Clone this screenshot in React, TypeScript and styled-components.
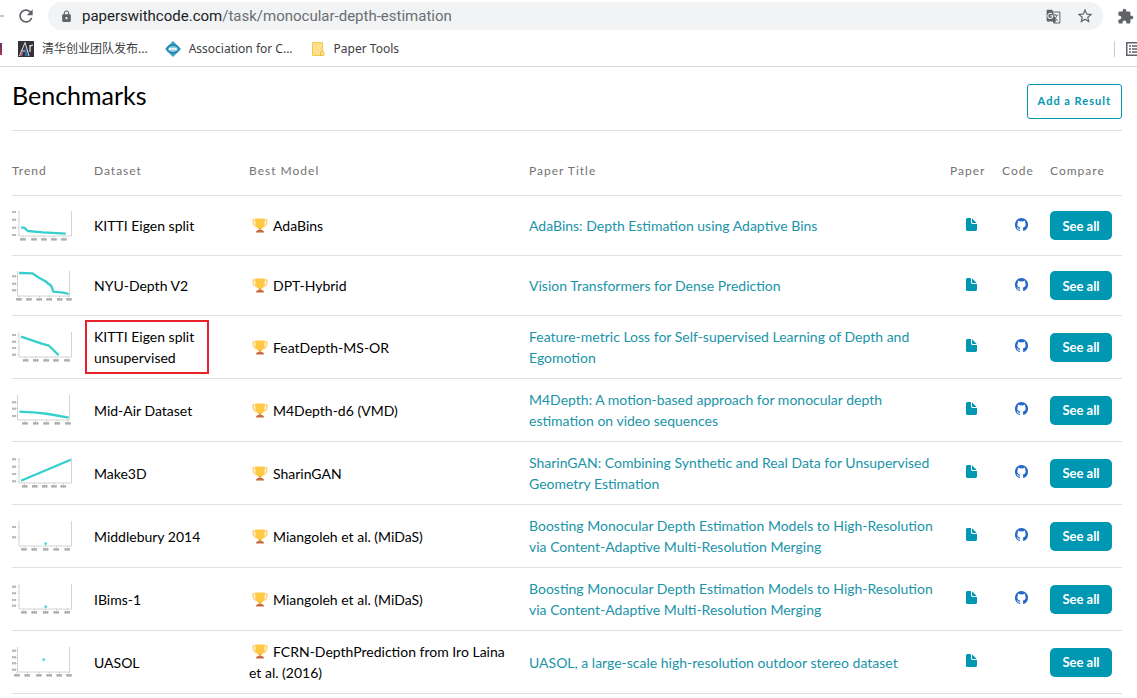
import React from 'react';
import styled, { createGlobalStyle, css } from 'styled-components';
import { MdRefresh, MdLock, MdGTranslate, MdStarBorder, MdExtension } from 'react-icons/md';
import { IoLogoGithub } from 'react-icons/io5';

const teal = '#0097b2';
const linkBlue = '#1a94a8';
const rule = '#dfdfdf';

const GlobalStyle = createGlobalStyle`
  *, *::before, *::after { box-sizing: border-box; }
  body {
    margin: 0;
    background: #fff;
    color: #000;
    font-family: Lato, "Liberation Sans", sans-serif;
    font-size: 14px;
    line-height: 21px;
    overflow: hidden;
  }
`;

/* ---------- browser chrome ---------- */

const Chrome = styled.header`
  border-bottom: 1px solid #d9dadc;
  font-family: "Noto Sans", "Noto Sans CJK SC", sans-serif;
  color: #3c4043;
  overflow: hidden;
`;

const Toolbar = styled.div`
  display: flex;
  align-items: center;
  height: 32px;
  gap: 12px;
  padding-right: 2px;
`;

const BackTip = styled.span`
  width: 4px;
  height: 2px;
  background: #c4c6c9;
`;

const IconButton = styled.button`
  display: flex;
  align-items: center;
  justify-content: center;
  width: 20px;
  height: 20px;
  padding: 0;
  border: 0;
  background: none;
  color: #5f6368;
`;

const AddressBar = styled.div`
  flex: 1;
  display: flex;
  align-items: center;
  gap: 12px;
  height: 28px;
  padding: 0 8px 0 12px;
  border-radius: 14px;
  background: #f1f3f4;
  color: #5f6368;
`;

const Address = styled.div`
  flex: 1;
  margin-left: -3px;
  font-family: Roboto, sans-serif;
  font-size: 15px;
  line-height: 20px;
  color: #6a6e73;
  white-space: nowrap;
`;

const Host = styled.span`
  color: #202124;
`;

const Bookmarks = styled.nav`
  display: flex;
  align-items: center;
  height: 34px;
  font-size: 12px;
  line-height: 20px;
`;

const BookmarkEdge = styled.span`
  width: 2px;
  height: 12px;
  margin-right: 16px;
  background: linear-gradient(#6a2a6a, #a33a55);
`;

const Bookmark = styled.a`
  display: flex;
  align-items: center;
  gap: 8px;
  margin-right: 17px;
  color: #3c4043;
  text-decoration: none;
  white-space: nowrap;
`;

const ReadingList = styled.div`
  display: flex;
  align-items: center;
  width: 23px;
  height: 16px;
  margin-left: auto;
  padding-left: 11px;
  border-left: 1px solid #c8cacd;
  overflow: hidden;
  svg { flex-shrink: 0; }
`;

/* ---------- page ---------- */

const Page = styled.main`
  padding: 0 15px 0 12px;
`;

const TitleBar = styled.div`
  display: flex;
  align-items: center;
  justify-content: space-between;
  height: 64px;
  padding-top: 6px;
  border-bottom: 1px solid ${rule};
`;

const Title = styled.h1`
  margin: 0;
  padding-bottom: 14px;
  font-size: 25px;
  line-height: 32px;
  font-weight: 400;
`;

const AddButton = styled.button`
  height: 35px;
  padding: 0 10px 2px;
  border: 1px solid ${teal};
  border-radius: 3px;
  background: #fff;
  color: ${teal};
  font: 700 11px/20px Lato, sans-serif;
  letter-spacing: 1px;
  white-space: nowrap;
`;

const Table = styled.table`
  width: 100%;
  table-layout: fixed;
  border-collapse: separate;
  border-spacing: 0;
`;

const Col = styled.col<{ $w?: number }>`
  ${(p) => p.$w && css`width: ${p.$w}px;`}
`;

const Th = styled.th`
  height: 65px;
  padding: 0 0 14px;
  vertical-align: bottom;
  text-align: left;
  border-bottom: 1px solid ${rule};
  font-size: 12px;
  line-height: 20px;
  font-weight: 400;
  letter-spacing: 1px;
  color: #737373;
  white-space: nowrap;
`;

const Td = styled.td`
  height: 60px;
  padding: 10px 10px 10px 0;
  vertical-align: middle;
  border-bottom: 1px solid ${rule};
`;

const IconTd = styled(Td)<{ $pad: number }>`
  padding: 0 0 3px ${(p) => p.$pad}px;
`;

const ActionTd = styled(Td)`
  padding: 0;
`;

const Spark = styled.svg`
  display: block;
  width: 60px;
  height: 32px;
  overflow: hidden;
`;

const PaperLink = styled.a`
  color: ${linkBlue};
  text-decoration: none;
`;

const IconLink = styled.a<{ $color: string }>`
  display: flex;
  color: ${(p) => p.$color};
`;

const SeeAll = styled.button`
  display: block;
  width: 62px;
  height: 29px;
  padding: 0;
  border: 0;
  border-radius: 5px;
  background: ${teal};
  color: #fff;
  font: 700 13px/20px Lato, sans-serif;
`;

const Marked = styled.span`
  display: block;
  position: relative;
  width: 106px;
  &::after {
    content: '';
    position: absolute;
    inset: -6px -9px;
    border: 2px solid #e8222c;
  }
`;

const Cup = styled.svg`
  width: 16px;
  height: 15px;
  margin: 0 5px 0 3px;
  vertical-align: -2px;
`;

const Trophy = () => (
  <Cup viewBox="0 0 32 30" aria-hidden="true">
    <path
      d="M7 4H2.500v4c0 5 2.500 8 7 9M25 4h4.500v4c0 5-2.500 8-7 9"
      fill="none"
      stroke="#ffcf70"
      strokeWidth="3"
    />
    <path fill="#ffc845" d="M6.500 1h19v8c0 7-3 11-7 12.500h-5C9.500 20 6.500 16 6.500 9z" />
    <path fill="#f5a93c" d="M13.500 20h5v5h-5z" />
    <path fill="#c8683f" d="M8 29c0-3 2-5 5-5h6c3 0 5 2 5 5z" />
  </Cup>
);

const DocumentIcon = () => (
  <svg width="11" height="13" viewBox="0 0 11 13" fill="currentColor" aria-hidden="true">
    <path d="M1.500 0H5v4.500C5 5.300 5.700 6 6.500 6H11v5.500c0 .8-.7 1.500-1.500 1.500h-8C.7 13 0 12.300 0 11.500v-10C0 .7.7 0 1.500 0z" />
    <path d="M6 .3L10.700 5H6.700C6.300 5 6 4.700 6 4.300z" />
  </svg>
);

interface Chart {
  left: number;
  right: number;
  ys: number[];
  xs: number[];
  line?: string;
  dot?: [number, number];
}

const TrendChart = ({ chart, name }: { chart: Chart; name: string }) => (
  <Spark viewBox="0 0 60 32" role="img" aria-label={`Trend for ${name}`}>
    <path
      d={`M${chart.left} 1V26H${chart.right}V1`}
      fill="none"
      stroke="#d4d4d4"
      strokeWidth="1"
    />
    {chart.ys.map((y) => (
      <g key={y} fill="#b4b4b4">
        <path d={`M0 ${y - 1}h1v2h-1zM1.500 ${y - 1}h1v2h-1zM3 ${y - 1}h1v2h-1z`} />
        <path d={`M0 ${y - 1}h4v2h-4z`} opacity=".7" />
        <path d={`M${chart.left - 1.5} ${y - 0.25}h1.500v.5h-1.500z`} />
      </g>
    ))}
    {chart.xs.map((x) => (
      <g key={x} fill="#a6a6a6">
        <path d={`M${x - 2.7} 28.200h1.400v2.200h-1.400zM${x - 0.8} 28.200h1.400v2.200h-1.400zM${x + 1.2} 28.200h1.400v2.200h-1.400z`} />
        <path d={`M${x - 2.7} 28.200h5.300v2.200h-5.300z`} opacity=".7" />
        <path d={`M${x - 0.25} 26h.5v1.500h-.5z`} />
      </g>
    ))}
    {chart.line && (
      <polyline points={chart.line} fill="none" stroke="#35d0cc" strokeWidth="2.300" strokeLinejoin="round" />
    )}
    {chart.dot && <circle cx={chart.dot[0]} cy={chart.dot[1]} r="1.400" fill="#4fd8d6" />}
  </Spark>
);

interface Row {
  dataset: string;
  marked?: boolean;
  model: string;
  paper: string;
  code: boolean;
  chart: Chart;
}

const rows: Row[] = [
  {
    dataset: 'KITTI Eigen split',
    model: 'AdaBins',
    paper: 'AdaBins: Depth Estimation using Adaptive Bins',
    code: true,
    chart: {
      left: 7, right: 59.5, ys: [2, 9.7, 17.7, 25], xs: [11, 22, 32, 42, 52],
      line: '9,17.7 12.300,17.700 15.700,21 31,22.300 53.700,23.700',
    },
  },
  {
    dataset: 'NYU-Depth V2',
    model: 'DPT-Hybrid',
    paper: 'Vision Transformers for Dense Prediction',
    code: true,
    chart: {
      left: 5.5, right: 57.5, ys: [6.3, 13.7, 20.3], xs: [7, 17, 27.3, 37.3, 47.7, 57],
      line: '7,3 20.300,3.300 27,7.700 33,11 39.300,16 41.300,21.700 51.300,22.700 56.700,24',
    },
  },
  {
    dataset: 'KITTI Eigen split unsupervised',
    marked: true,
    model: 'FeatDepth-MS-OR',
    paper: 'Feature-metric Loss for Self-supervised Learning of Depth and Egomotion',
    code: true,
    chart: {
      left: 7, right: 59.5, ys: [4, 10.7, 17, 23.7], xs: [13.7, 23.7, 34.3, 44, 55],
      line: '9,5.700 29.700,12.700 37,14.700 46.700,24.300',
    },
  },
  {
    dataset: 'Mid-Air Dataset',
    model: 'M4Depth-d6 (VMD)',
    paper: 'M4Depth: A motion-based approach for monocular depth estimation on video sequences',
    code: true,
    chart: {
      left: 5.5, right: 57.5, ys: [8.3, 14.7, 22], xs: [13, 23.7, 34.3, 45.3, 56],
      line: '7.300,17.700 24.700,18.700 36.300,20 56.700,23.700',
    },
  },
  {
    dataset: 'Make3D',
    model: 'SharinGAN',
    paper: 'SharinGAN: Combining Synthetic and Real Data for Unsupervised Geometry Estimation',
    code: true,
    chart: {
      left: 7, right: 59.5, ys: [2.3, 9.7, 17, 24.3], xs: [12.7, 22.7, 32.7, 42, 51.3],
      line: '9,23.700 58.700,2.700',
    },
  },
  {
    dataset: 'Middlebury 2014',
    model: 'Miangoleh et al. (MiDaS)',
    paper: 'Boosting Monocular Depth Estimation Models to High-Resolution via Content-Adaptive Multi-Resolution Merging',
    code: true,
    chart: { left: 7, right: 59.5, ys: [7, 17.3], xs: [12, 22.3, 33.7, 44.3, 55.3], dot: [33.7, 23.7] },
  },
  {
    dataset: 'IBims-1',
    model: 'Miangoleh et al. (MiDaS)',
    paper: 'Boosting Monocular Depth Estimation Models to High-Resolution via Content-Adaptive Multi-Resolution Merging',
    code: true,
    chart: { left: 7, right: 59.5, ys: [3.7, 10.3, 17, 22.7], xs: [12, 22.3, 33.7, 44.3, 55.3], dot: [33.7, 23.7] },
  },
  {
    dataset: 'UASOL',
    model: 'FCRN-DepthPrediction from Iro Laina et al. (2016)',
    paper: 'UASOL, a large-scale high-resolution outdoor stereo dataset',
    code: false,
    chart: { left: 5.5, right: 57.5, ys: [4.7, 11.3, 17.3, 23.7], xs: [5, 15.3, 27, 37.3, 47.3, 57], dot: [31.7, 13.7] },
  },
];

const headings = ['Trend', 'Dataset', 'Best Model', 'Paper Title', 'Paper', 'Code', 'Compare'];

const ArIcon = () => (
  <svg width="16" height="16" viewBox="0 0 16 16" aria-hidden="true">
    <rect width="16" height="16" fill="#35323a" />
    <path d="M1.500 15L7 1.500l4 13.500M3.500 10h5" fill="none" stroke="#e4e4ea" strokeWidth="1" />
    <path d="M6.500 5L10 15H7z" fill="#2f6fae" />
    <path d="M2 15l2-5 1 2-1 3z" fill="#b8606a" />
    <path d="M12 4v7M12 6c.5-1.500 1.500-2 3-2" fill="none" stroke="#e4e4ea" strokeWidth="1.200" />
  </svg>
);

const AssociationIcon = () => (
  <svg width="16" height="16" viewBox="0 0 16 16" aria-hidden="true">
    <path d="M8 0l8 8-8 8-8-8z" fill="#3f9fc4" />
    <ellipse cx="8" cy="8" rx="6.500" ry="4.500" fill="#1d83ad" />
    <ellipse cx="8" cy="8" rx="5" ry="3" fill="#8ccbe0" />
    <path d="M4 8h8" stroke="#fff" strokeWidth="2" strokeDasharray="2 .6" />
  </svg>
);

const FolderIcon = () => (
  <svg width="16" height="16" viewBox="0 0 16 16" aria-hidden="true">
    <path d="M2.500 1.500h10v8.500l1.500 1v3.500H2.500z" fill="#ffe08a" stroke="#eec84f" />
    <path d="M10.500 14.500v-3l1.500-1.500h.5" fill="none" stroke="#e6b93a" />
  </svg>
);

const ListIcon = () => (
  <svg width="16" height="14" viewBox="0 0 16 14" aria-hidden="true">
    <rect x=".75" y=".75" width="14.500" height="12.500" fill="none" stroke="#5f6368" strokeWidth="1.500" />
    <path d="M3 4h2M3 7h2M3 10h2M6 4h8M6 7h8M6 10h8" stroke="#5f6368" strokeWidth="1.500" />
  </svg>
);

export default function App() {
  return (
    <>
      <GlobalStyle />
      <Chrome>
        <Toolbar>
          <BackTip />
          <IconButton aria-label="Reload"><MdRefresh size={20} /></IconButton>
          <AddressBar>
            <MdLock size={13} />
            <Address><Host>paperswithcode.com</Host>/task/monocular-depth-estimation</Address>
            <IconButton aria-label="Translate this page"><MdGTranslate size={15} /></IconButton>
            <IconButton aria-label="Bookmark this page"><MdStarBorder size={18} /></IconButton>
          </AddressBar>
          <IconButton aria-label="Extensions"><MdExtension size={17} /></IconButton>
        </Toolbar>
        <Bookmarks>
          <BookmarkEdge />
          <Bookmark href="#"><ArIcon />清华创业团队发布...</Bookmark>
          <Bookmark href="#"><AssociationIcon />Association for C...</Bookmark>
          <Bookmark href="#"><FolderIcon />Paper Tools</Bookmark>
          <ReadingList><ListIcon /></ReadingList>
        </Bookmarks>
      </Chrome>
      <Page>
        <TitleBar>
          <Title>Benchmarks</Title>
          <AddButton>Add a Result</AddButton>
        </TitleBar>
        <Table>
          <colgroup>
            <Col $w={82} />
            <Col $w={155} />
            <Col $w={280} />
            <Col />
            <Col $w={52} />
            <Col $w={48} />
            <Col $w={72} />
          </colgroup>
          <thead>
            <tr>{headings.map((h) => <Th key={h} scope="col">{h}</Th>)}</tr>
          </thead>
          <tbody>
            {rows.map((r) => (
              <tr key={r.dataset}>
                <ActionTd><TrendChart chart={r.chart} name={r.dataset} /></ActionTd>
                <Td>{r.marked ? <Marked>{r.dataset}</Marked> : r.dataset}</Td>
                <Td><Trophy />{r.model}</Td>
                <Td><PaperLink href="#">{r.paper}</PaperLink></Td>
                <IconTd $pad={16}>
                  <IconLink href="#" $color={teal} aria-label={`Paper for ${r.dataset}`}><DocumentIcon /></IconLink>
                </IconTd>
                <IconTd $pad={12}>
                  {r.code && (
                    <IconLink href="#" $color="#2468c8" aria-label={`Code for ${r.dataset}`}><IoLogoGithub size={15} /></IconLink>
                  )}
                </IconTd>
                <ActionTd><SeeAll>See all</SeeAll></ActionTd>
              </tr>
            ))}
          </tbody>
        </Table>
      </Page>
    </>
  );
}
